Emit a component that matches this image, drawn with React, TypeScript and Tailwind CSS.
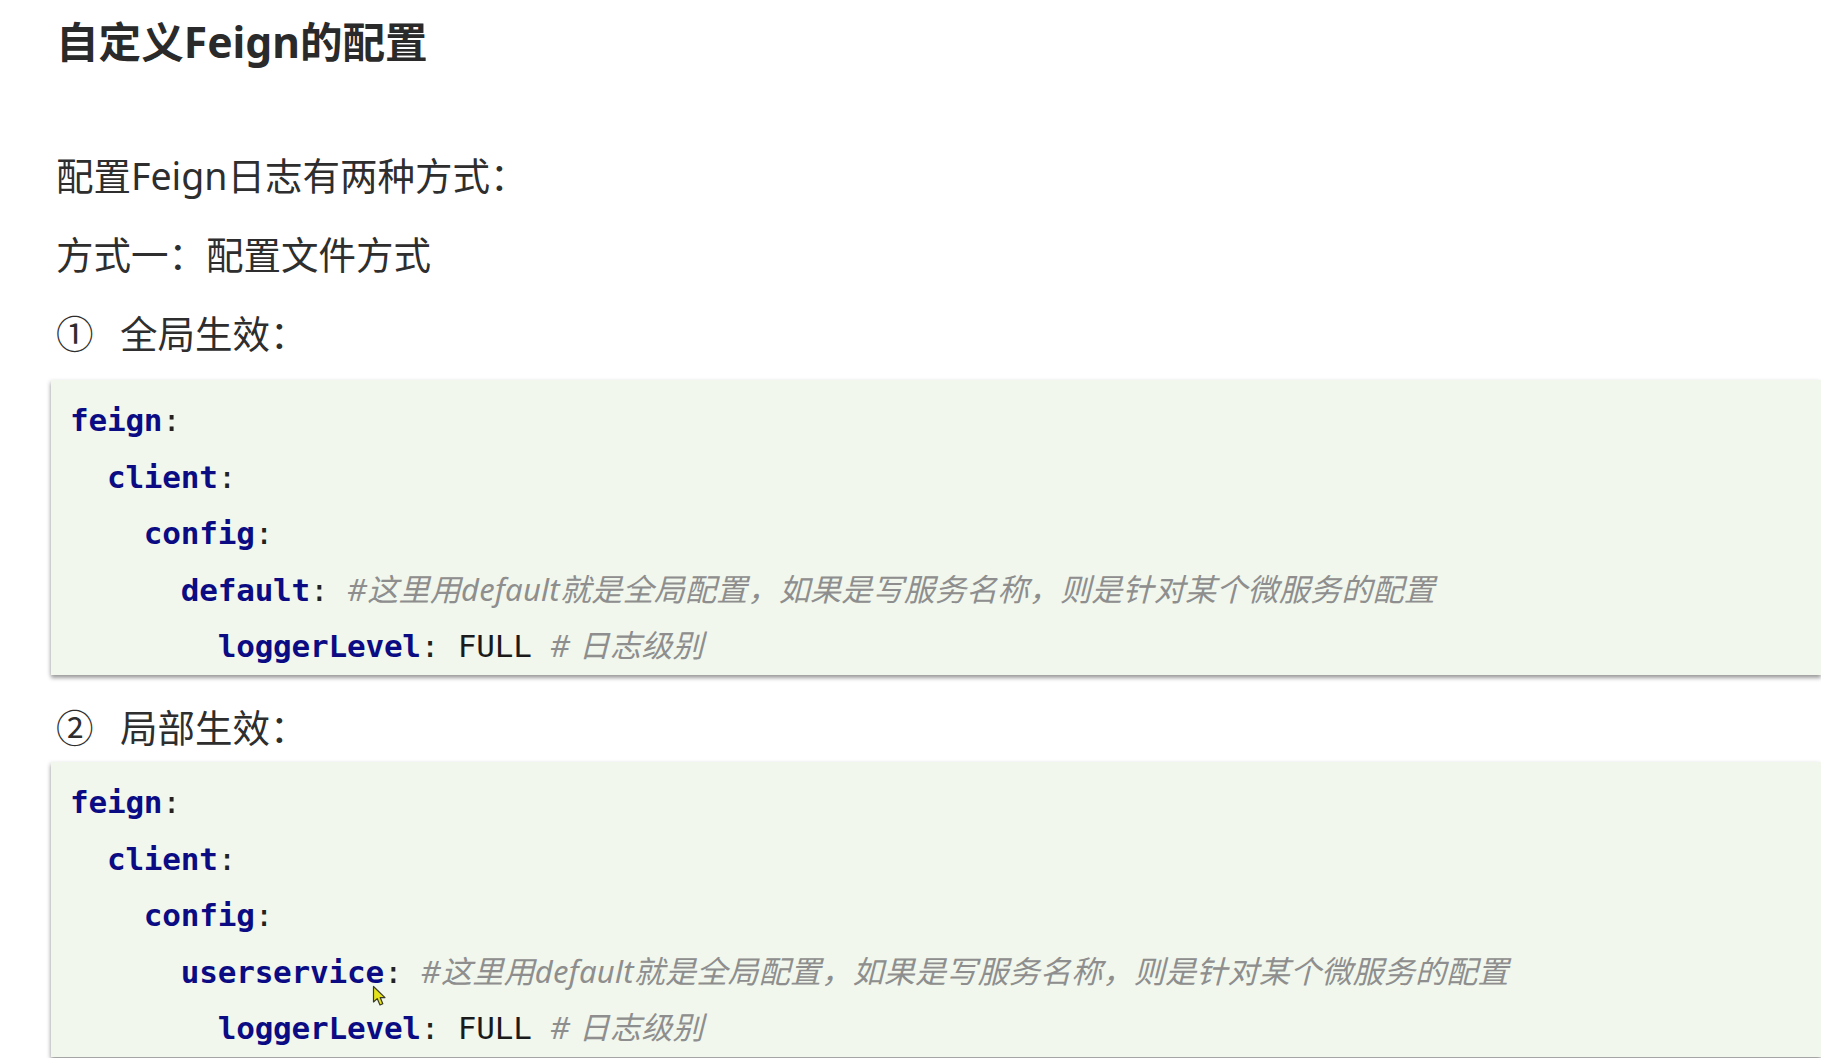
import React from 'react';

const K = ({ children }: { children: React.ReactNode }) => (
  <span className="font-bold text-[#0b0b84]">{children}</span>
);

const Colon = () => <span className="text-[#222]">:</span>;

const Comment = ({ children }: { children: React.ReactNode }) => (
  <span className="italic leading-none tracking-[0.25px] text-[#8e8e8e] font-['Noto_Sans','Noto_Sans_CJK_SC',sans-serif]">
    {children}
  </span>
);

const CodeBlock = ({ name, cursor }: { name: string; cursor?: boolean }) => (
  <div className="relative ml-[51px] bg-[#f1f7ed] pl-[19px] pt-[12px] shadow-[0_3px_4px_rgba(0,0,0,0.38),-2px_0_4px_rgba(0,0,0,0.06)]">
    <div className="whitespace-pre text-[31px] leading-[56.6px] tracking-[-0.2px] text-[#1a1a1a] font-['DejaVu_Sans_Mono',monospace]">
      <div>
        <K>feign</K>
        <Colon />
      </div>
      <div>
        {'  '}
        <K>client</K>
        <Colon />
      </div>
      <div>
        {'    '}
        <K>config</K>
        <Colon />
      </div>
      <div>
        {'      '}
        <K>{name}</K>
        <Colon />{' '}
        <Comment>#这里用default就是全局配置，如果是写服务名称，则是针对某个微服务的配置</Comment>
      </div>
      <div>
        {'        '}
        <K>loggerLevel</K>
        <Colon /> FULL <Comment># 日志级别</Comment>
      </div>
    </div>

    {/* mouse pointer */}
    {cursor && (
      <svg
        className="absolute left-[321px] top-[223px]"
        width="16"
        height="22"
        viewBox="0 0 16 22"
      >
        <path
          d="M1.5 1.5 L1.5 17 L5.2 13.6 L8 20 L10.8 18.8 L8.2 12.6 L13 12.6 Z"
          fill="#e4e21a"
          stroke="#3a3a2a"
          strokeWidth="1.2"
          strokeLinejoin="round"
        />
      </svg>
    )}
  </div>
);

export default function App() {
  return (
    <div className="min-h-screen overflow-hidden bg-white text-[#2e2e2e] font-['Noto_Sans','Noto_Sans_CJK_SC',sans-serif]">
      {/* Title */}
      <h1 className="ml-[56px] pt-[13px] text-[42.6px] font-bold leading-[56px] text-[#2a2a2a]">
        自定义Feign的配置
      </h1>

      <p className="ml-[56px] mt-[79px] text-[37.5px] leading-[56px]">配置Feign日志有两种方式：</p>
      <p className="ml-[56px] mt-[23px] text-[37.5px] leading-[56px]">方式一：配置文件方式</p>

      <div className="ml-[56px] mt-[23px] flex text-[37.5px] leading-[56px]">
        <span className="w-[64px]">①</span>
        <span>全局生效：</span>
      </div>

      <div className="mt-[18px]">
        <CodeBlock name="default" />
      </div>

      <div className="ml-[56px] mt-[25px] flex text-[37.5px] leading-[56px]">
        <span className="w-[64px]">②</span>
        <span>局部生效：</span>
      </div>

      <div className="mt-[6px]">
        <CodeBlock name="userservice" cursor />
      </div>
    </div>
  );
}
